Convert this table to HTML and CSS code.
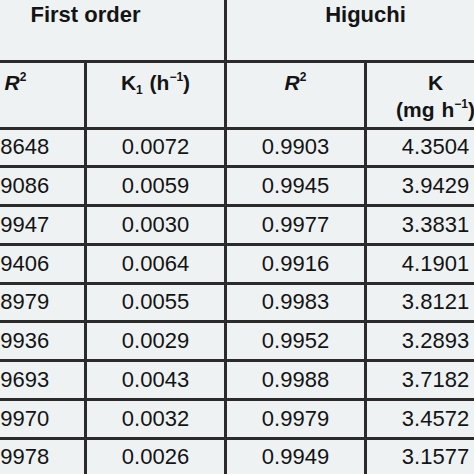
FILE: index.html
```html
<!DOCTYPE html>
<html>
<head>
<meta charset="utf-8">
<link rel="stylesheet" href="styles.css">
</head>
<body>
<div class="frame">
<table class="kinetics">
<colgroup><col><col><col><col></colgroup>
<thead>
<tr class="group"><th colspan="2">First order</th><th colspan="2">Higuchi</th></tr>
<tr class="units">
<th><i>R</i><sup>2</sup></th>
<th>K<sub>1</sub> (h<sup>−1</sup>)</th>
<th><i>R</i><sup>2</sup></th>
<th>K<br>(mg h<sup>−1</sup>)</th>
</tr>
</thead>
<tbody>
<tr><td>0.8648</td><td>0.0072</td><td>0.9903</td><td>4.3504</td></tr>
<tr><td>0.9086</td><td>0.0059</td><td>0.9945</td><td>3.9429</td></tr>
<tr><td>0.9947</td><td>0.0030</td><td>0.9977</td><td>3.3831</td></tr>
<tr><td>0.9406</td><td>0.0064</td><td>0.9916</td><td>4.1901</td></tr>
<tr><td>0.8979</td><td>0.0055</td><td>0.9983</td><td>3.8121</td></tr>
<tr><td>0.9936</td><td>0.0029</td><td>0.9952</td><td>3.2893</td></tr>
<tr><td>0.9693</td><td>0.0043</td><td>0.9988</td><td>3.7182</td></tr>
<tr><td>0.9970</td><td>0.0032</td><td>0.9979</td><td>3.4572</td></tr>
<tr><td>0.9978</td><td>0.0026</td><td>0.9949</td><td>3.1577</td></tr>
</tbody>
</table>
</div>
</body>
</html>
```
FILE: styles.css
```css
html, body {
  margin: 0;
  padding: 0;
  background: #eef2f3;
}

.frame {
  width: 474px;
  height: 474px;
  overflow: hidden;
}

.kinetics {
  margin: 0 0 0 -56px;
  width: 560px;
  table-layout: fixed;
  border-collapse: collapse;
  font-family: "Liberation Sans", Arial, Helvetica, sans-serif;
  color: #141414;
  font-size: 22px;
}

.kinetics col {
  width: 140px;
}

.kinetics th,
.kinetics td {
  border: 3px solid #2b2b2b;
  text-align: center;
  padding: 0;
}

.group th {
  border-top: none;
  height: 61px;
  box-sizing: border-box;
  vertical-align: top;
  font-size: 22px;
  line-height: 25px;
  padding-top: 2px;
  font-weight: bold;
}

.units th {
  height: 67px;
  box-sizing: border-box;
  vertical-align: top;
  font-size: 21px;
  line-height: 27px;
  padding-top: 6px;
  font-weight: bold;
  word-spacing: 1px;
}

.units i {
  font-style: italic;
}

.units sup,
.units sub {
  font-size: 12px;
  line-height: 0;
  position: relative;
}

.units sup {
  vertical-align: baseline;
  top: -9px;
}

.units sub {
  vertical-align: baseline;
  top: 4px;
}

.kinetics tbody tr {
  height: 38.75px;
}

.kinetics td {
  vertical-align: middle;
  line-height: 24px;
  font-weight: normal;
}
```
